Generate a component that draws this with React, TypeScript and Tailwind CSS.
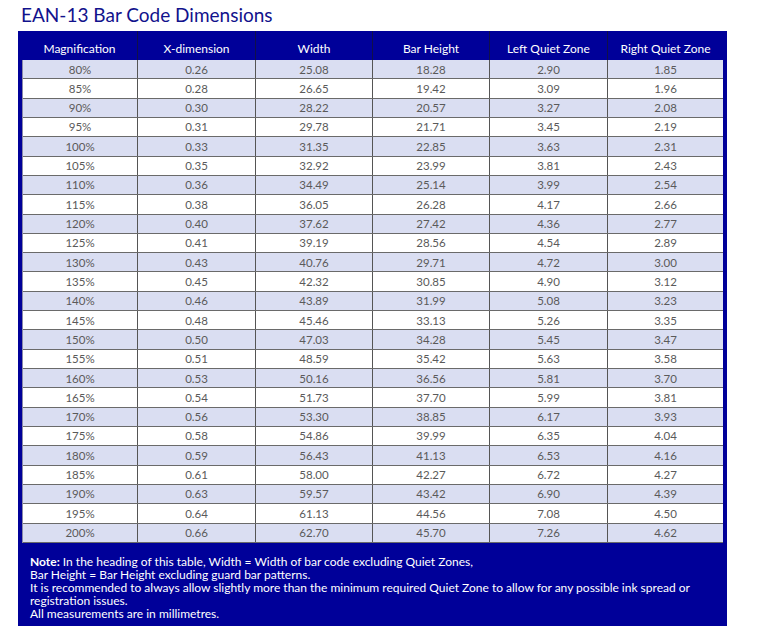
import React from "react";

const rows: string[][] = [
  ["80%", "0.26", "25.08", "18.28", "2.90", "1.85"],
  ["85%", "0.28", "26.65", "19.42", "3.09", "1.96"],
  ["90%", "0.30", "28.22", "20.57", "3.27", "2.08"],
  ["95%", "0.31", "29.78", "21.71", "3.45", "2.19"],
  ["100%", "0.33", "31.35", "22.85", "3.63", "2.31"],
  ["105%", "0.35", "32.92", "23.99", "3.81", "2.43"],
  ["110%", "0.36", "34.49", "25.14", "3.99", "2.54"],
  ["115%", "0.38", "36.05", "26.28", "4.17", "2.66"],
  ["120%", "0.40", "37.62", "27.42", "4.36", "2.77"],
  ["125%", "0.41", "39.19", "28.56", "4.54", "2.89"],
  ["130%", "0.43", "40.76", "29.71", "4.72", "3.00"],
  ["135%", "0.45", "42.32", "30.85", "4.90", "3.12"],
  ["140%", "0.46", "43.89", "31.99", "5.08", "3.23"],
  ["145%", "0.48", "45.46", "33.13", "5.26", "3.35"],
  ["150%", "0.50", "47.03", "34.28", "5.45", "3.47"],
  ["155%", "0.51", "48.59", "35.42", "5.63", "3.58"],
  ["160%", "0.53", "50.16", "36.56", "5.81", "3.70"],
  ["165%", "0.54", "51.73", "37.70", "5.99", "3.81"],
  ["170%", "0.56", "53.30", "38.85", "6.17", "3.93"],
  ["175%", "0.58", "54.86", "39.99", "6.35", "4.04"],
  ["180%", "0.59", "56.43", "41.13", "6.53", "4.16"],
  ["185%", "0.61", "58.00", "42.27", "6.72", "4.27"],
  ["190%", "0.63", "59.57", "43.42", "6.90", "4.39"],
  ["195%", "0.64", "61.13", "44.56", "7.08", "4.50"],
  ["200%", "0.66", "62.70", "45.70", "7.26", "4.62"],
];

const headers = [
  "Magnification",
  "X-dimension",
  "Width",
  "Bar Height",
  "Left Quiet Zone",
  "Right Quiet Zone",
];

export default function App() {
  return (
    <div
      className="w-[757px] h-[636px] bg-white"
      style={{ fontFamily: "Lato, 'Open Sans', sans-serif" }}
    >
      <div className="pl-[21px] pt-[4px] h-[31px] text-[19px] leading-[22px] text-[#12128c]">
        EAN-13 Bar Code Dimensions
      </div>
      <div className="ml-[18px] w-[709px] bg-[#000099] px-[4px]">
        <div className="grid grid-cols-[116px_118px_117px_117px_118px_1fr] h-[29px] text-white text-[12px]">
          {headers.map((h, i) => (
            <div
              key={h}
              className={`flex items-center justify-center pt-[6px] ${
                i < 5 ? "border-r border-[#10104a]" : ""
              }`}
            >
              {h}
            </div>
          ))}
        </div>
        <div className="border-l border-[#8a8aa8]">
          {rows.map((r, ri) => (
            <div
              key={ri}
              className={`grid grid-cols-[115px_118px_117px_117px_118px_1fr] h-[19.32px] border-b border-[#6a6a6a] text-[11.5px] text-[#5a5a5a] ${
                ri % 2 === 0 ? "bg-[#dadef2]" : "bg-white"
              }`}
            >
              {r.map((c, ci) => (
                <div
                  key={ci}
                  className={`flex items-center justify-center ${
                    ci < 5 ? "border-r border-[#555]" : ""
                  }`}
                >
                  {c}
                </div>
              ))}
            </div>
          ))}
        </div>
        <div className="h-[83px] pl-[8px] pt-[12px] text-white text-[12px] leading-[13px]">
          <div>
            <span className="font-bold">Note:</span> In the heading of this table,
            Width = Width of bar code excluding Quiet Zones,
          </div>
          <div>Bar Height = Bar Height excluding guard bar patterns.</div>
          <div>
            It is recommended to always allow slightly more than the minimum
            required Quiet Zone to allow for any possible ink spread or
          </div>
          <div>registration issues.</div>
          <div>All measurements are in millimetres.</div>
        </div>
      </div>
    </div>
  );
}
